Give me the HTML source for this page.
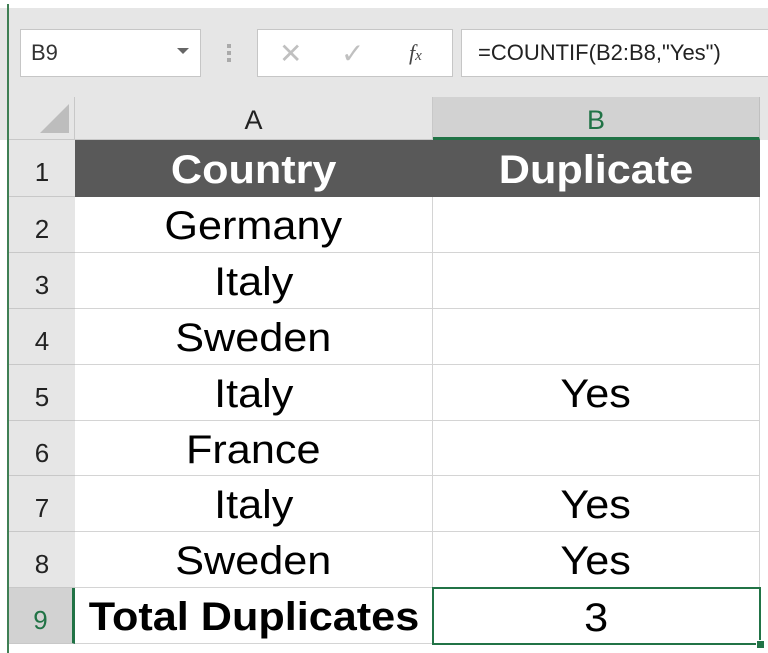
<!DOCTYPE html>
<html><head><style>
body{margin:0;width:768px;height:653px;background:#fff;position:relative;overflow:hidden;font-family:"Liberation Sans",Arial,sans-serif}
.a{position:absolute}
.rh{position:absolute;left:9px;width:66px;background:#e6e6e6;border-bottom:1px solid #c8c8c8;color:#222;font-size:26px;text-align:center;box-sizing:border-box}
.c{position:absolute;box-sizing:border-box;border-bottom:1px solid #d4d4d4;border-right:1px solid #d4d4d4;text-align:center;font-size:40px;color:#000;background:#fff}
.c span{display:inline-block;transform:scaleX(1.08)}
</style></head><body>
<div class="a" style="left:0;top:8px;width:768px;height:89px;background:#e6e6e6"></div>
<div class="a" style="left:0;top:97px;width:768px;height:43px;background:#e6e6e6"></div>
<div class="a" style="left:7px;top:4px;width:2px;height:649px;background:#3f7f54"></div>
<div class="a" style="left:20px;top:29px;width:181px;height:48px;background:#fff;border:1px solid #c6c6c6;box-sizing:border-box"></div>
<div class="a" style="left:31px;top:40px;font-size:22px;color:#333">B9</div>
<div class="a" style="left:177px;top:48px;width:0;height:0;border-left:6px solid transparent;border-right:6px solid transparent;border-top:6px solid #666"></div>
<div class="a" style="left:227px;top:44px;width:4px;height:4px;background:#aaa;box-shadow:0 7px 0 #aaa,0 14px 0 #aaa"></div>
<div class="a" style="left:257px;top:29px;width:196px;height:48px;background:#fff;border:1px solid #c6c6c6;box-sizing:border-box"></div>
<div class="a" style="left:279px;top:37px;font-size:28px;color:#c0c0c0">✕</div>
<div class="a" style="left:341px;top:37px;font-size:28px;color:#c0c0c0">✓</div>
<div class="a" style="left:409px;top:40px;font-size:22px;color:#444;font-family:'Liberation Serif',serif;font-style:italic">f<span style="font-size:15px">x</span></div>
<div class="a" style="left:461px;top:29px;width:320px;height:48px;background:#fff;border:1px solid #c6c6c6;box-sizing:border-box"></div>
<div class="a" style="left:478px;top:40px;font-size:22px;color:#222">=COUNTIF(B2:B8,"Yes")</div>
<div class="a" style="left:9px;top:97px;width:66px;height:43px;background:#e6e6e6;border-right:1px solid #c8c8c8;border-bottom:1px solid #c8c8c8;box-sizing:border-box"></div>
<div class="a" style="left:40px;top:104px;width:0;height:0;border-left:29px solid transparent;border-bottom:29px solid #bdbdbd"></div>
<div class="a" style="left:75px;top:97px;width:358px;height:43px;background:#e6e6e6;border-right:1px solid #c8c8c8;border-bottom:1px solid #c8c8c8;box-sizing:border-box;text-align:center;font-size:27px;line-height:46px;color:#222">A</div>
<div class="a" style="left:433px;top:97px;width:327px;height:43px;background:#d2d2d2;border-right:1px solid #c0c0c0;border-bottom:3px solid #217346;box-sizing:border-box;text-align:center;font-size:27px;line-height:46px;color:#217346">B</div>
<div class="a" style="left:760px;top:140px;width:8px;height:513px;background:#fff"></div>
<div class="rh" style="top:140px;height:57px;line-height:64px">1</div>
<div class="c" style="left:75px;top:140px;width:358px;height:57px;background:#595959;color:#fff;font-weight:bold;line-height:60px;border-color:#595959"><span>Country</span></div>
<div class="c" style="left:433px;top:140px;width:327px;height:57px;background:#595959;color:#fff;font-weight:bold;line-height:60px;border-color:#595959"><span>Duplicate</span></div>
<div class="rh" style="top:197px;height:56px;line-height:64px">2</div>
<div class="c" style="left:75px;top:197px;width:358px;height:56px;line-height:58px"><span>Germany</span></div>
<div class="c" style="left:433px;top:197px;width:327px;height:56px"></div>
<div class="rh" style="top:253px;height:56px;line-height:64px">3</div>
<div class="c" style="left:75px;top:253px;width:358px;height:56px;line-height:58px"><span>Italy</span></div>
<div class="c" style="left:433px;top:253px;width:327px;height:56px"></div>
<div class="rh" style="top:309px;height:56px;line-height:64px">4</div>
<div class="c" style="left:75px;top:309px;width:358px;height:56px;line-height:58px"><span>Sweden</span></div>
<div class="c" style="left:433px;top:309px;width:327px;height:56px"></div>
<div class="rh" style="top:365px;height:56px;line-height:64px">5</div>
<div class="c" style="left:75px;top:365px;width:358px;height:56px;line-height:58px"><span>Italy</span></div>
<div class="c" style="left:433px;top:365px;width:327px;height:56px;line-height:58px"><span>Yes</span></div>
<div class="rh" style="top:421px;height:55px;line-height:64px">6</div>
<div class="c" style="left:75px;top:421px;width:358px;height:55px;line-height:58px"><span>France</span></div>
<div class="c" style="left:433px;top:421px;width:327px;height:55px"></div>
<div class="rh" style="top:476px;height:56px;line-height:64px">7</div>
<div class="c" style="left:75px;top:476px;width:358px;height:56px;line-height:58px"><span>Italy</span></div>
<div class="c" style="left:433px;top:476px;width:327px;height:56px;line-height:58px"><span>Yes</span></div>
<div class="rh" style="top:532px;height:56px;line-height:64px">8</div>
<div class="c" style="left:75px;top:532px;width:358px;height:56px;line-height:58px"><span>Sweden</span></div>
<div class="c" style="left:433px;top:532px;width:327px;height:56px;line-height:58px"><span>Yes</span></div>
<div class="rh" style="top:588px;height:56px;line-height:64px;background:#d2d2d2;color:#217346;border-right:3px solid #217346">9</div>
<div class="c" style="left:75px;top:588px;width:358px;height:56px;line-height:58px;font-weight:bold"><span>Total Duplicates</span></div>
<div class="c" style="left:432px;top:587px;width:329px;height:58px;line-height:58px;border:2px solid #217346"><span>3</span></div>
<div class="a" style="left:756px;top:640px;width:7px;height:7px;background:#217346;border:1px solid #fff"></div>
</body></html>
